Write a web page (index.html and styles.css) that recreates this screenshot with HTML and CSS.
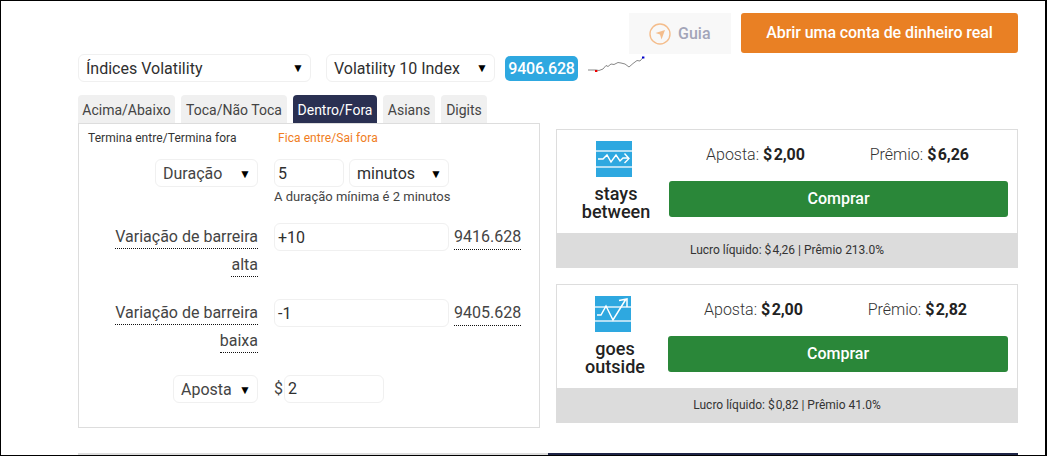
FILE: index.html
```html
<!DOCTYPE html>
<html lang="pt">
<head>
<meta charset="utf-8">
<title>Negociação</title>
<link rel="stylesheet" href="styles.css">
</head>
<body>
<div class="frame">
  <div class="top-actions">
    <div class="guide">
      <svg class="guide-icon" width="22" height="22" viewBox="0 0 22 22"><circle cx="11" cy="11" r="10" fill="none" stroke="#f4bd8c" stroke-width="1.4"/><path d="M6.5 10 L16 7 L12.5 16.5 L11 11.5 Z" fill="#f4bd8c"/></svg>
      <span>Guia</span>
    </div>
    <div class="real-account">Abrir uma conta de dinheiro real</div>
  </div>
  <div class="market-row">
    <div class="select market"><span>Índices Volatility</span><i class="caret">▼</i></div>
    <div class="select symbol"><span>Volatility 10 Index</span><i class="caret">▼</i></div>
    <div class="spot">9406.628</div>
    <svg class="spark" width="60" height="22" viewBox="0 0 60 22"><path d="M1 16 H9 L12 16.500 L16 15 L19 11.500 L21 12.500 L24 10 L27 10.500 L31 8.500 L34 9 L38 10 L42 13 L46 9.500 L50 6.500 L53 7 L56 3.500" fill="none" stroke="#555" stroke-width=".7"/><rect x="8" y="16" width="2.400" height="2" fill="#e00"/><rect x="55" y="2.500" width="2.400" height="2" fill="#00c"/></svg>
  </div>
  <div class="tabs">
    <div class="tab">Acima/Abaixo</div>
    <div class="tab">Toca/Não Toca</div>
    <div class="tab active">Dentro/Fora</div>
    <div class="tab">Asians</div>
    <div class="tab">Digits</div>
  </div>
  <div class="content">
    <div class="form">
      <div class="subtabs"><span class="sub">Termina entre/Termina fora</span><span class="sub current">Fica entre/Sai fora</span></div>
      <div class="f-row duration-row">
        <div class="f-label"><div class="select small duration"><span>Duração</span><i class="caret">▼</i></div></div>
        <div class="f-field">
          <div class="inline">
            <div class="input dur-value">5</div>
            <div class="select small unit"><span>minutos</span><i class="caret">▼</i></div>
          </div>
          <div class="hint">A duração mínima é 2 minutos</div>
        </div>
      </div>
      <div class="f-row barrier">
        <div class="f-label"><span class="dotted">Variação de barreira</span><br><span class="dotted">alta</span></div>
        <div class="f-field inline"><div class="input wide">+10</div><span class="abs-value dotted">9416.628</span></div>
      </div>
      <div class="f-row barrier">
        <div class="f-label"><span class="dotted">Variação de barreira</span><br><span class="dotted">baixa</span></div>
        <div class="f-field inline"><div class="input wide">-1</div><span class="abs-value dotted">9405.628</span></div>
      </div>
      <div class="f-row amount">
        <div class="f-label"><div class="select small stake"><span>Aposta</span><i class="caret">▼</i></div></div>
        <div class="f-field inline"><span class="currency">$</span><div class="input amount-value">2</div></div>
      </div>
    </div>
    <div class="cards">
      <div class="card">
        <div class="card-main first">
          <div class="card-type">
            <svg class="type-icon" width="36" height="36" viewBox="0 0 36 36"><rect width="36" height="36" fill="#2ea8e0"/><path d="M0 10 H36 M0 26 H36" stroke="#dff1fa" stroke-width="1.600"/><path d="M2 18 H7 L11 14 L15 21 L20 14 L24 20 L27 17 H33 M28.500 12.500 L33 17.500 L28.500 22" fill="none" stroke="#fff" stroke-width="1.400"/></svg>
            <div class="type-name">stays<br>between</div>
          </div>
          <div class="card-body">
            <div class="stake-line"><span class="pair"><span class="lab">Aposta:</span> <b>$&#8202;2,00</b></span><span class="pair"><span class="lab">Prêmio:</span> <b>$&#8202;6,26</b></span></div>
            <div class="buy">Comprar</div>
          </div>
        </div>
        <div class="card-foot">Lucro líquido: $&#8202;4,26 | Prêmio 213.0%</div>
      </div>
      <div class="card">
        <div class="card-main">
          <div class="card-type">
            <svg class="type-icon" width="36" height="36" viewBox="0 0 36 36"><rect width="36" height="36" fill="#2ea8e0"/><path d="M0 11 H36 M0 25 H36" stroke="#dff1fa" stroke-width="1.300"/><path d="M2 19 H6 L11 10 L18 24 L31 3 M24 4.500 L32 3 L32 11" fill="none" stroke="#fff" stroke-width="1.500"/></svg>
            <div class="type-name">goes<br>outside</div>
          </div>
          <div class="card-body">
            <div class="stake-line"><span class="pair"><span class="lab">Aposta:</span> <b>$&#8202;2,00</b></span><span class="pair"><span class="lab">Prêmio:</span> <b>$&#8202;2,82</b></span></div>
            <div class="buy">Comprar</div>
          </div>
        </div>
        <div class="card-foot">Lucro líquido: $&#8202;0,82 | Prêmio 41.0%</div>
      </div>
    </div>
  </div>
  <div class="bottom-strip"><div class="strip-left"></div><div class="strip-right"></div></div>
</div>
</body>
</html>
```
FILE: styles.css
```css
* { box-sizing: border-box; }
html, body { margin: 0; height: 456px; overflow: hidden; background: #fff; }
body { font-family: Roboto, "Liberation Sans", sans-serif; color: #2f2f2f; }
.frame { width: 1047px; height: 456px; border: 1px solid #000; border-width: 1px 2px 1px 1px; padding: 12px 27px 0 77px; overflow: hidden; }

.top-actions { display: flex; justify-content: flex-end; gap: 10px; height: 41px; }
.guide { width: 102px; height: 41px; background: #f8f8f8; display: flex; align-items: center; padding-left: 20px; gap: 7px; color: #a3a5b8; font-size: 16px; font-weight: 500; }
.real-account { width: 277px; height: 40px; padding-bottom: 2px; background: #e98024; color: #fff; border-radius: 3px; font-size: 16px; font-weight: 500; letter-spacing: -.08px; display: flex; align-items: center; justify-content: center; }

.market-row { display: flex; align-items: center; height: 28px; }
.select { display: flex; align-items: center; justify-content: space-between; background: #fff; border: 1px solid #f0f0f0; border-radius: 6px; font-size: 16px; height: 28px; padding: 0 6px 0 7px; }
.caret { font-style: normal; font-size: 12px; color: #000; }
.market { width: 233px; }
.symbol { width: 169px; margin-left: 15px; }
.spot { width: 73px; height: 25px; margin-left: 10px; background: #2ea8e0; color: #fff; border-radius: 5px; font-size: 16px; font-weight: 500; letter-spacing: -.2px; display: flex; align-items: center; justify-content: center; }
.spark { margin-left: 9px; margin-top: -6px; }

.tabs { display: flex; gap: 6px; margin-top: 13px; height: 28px; }
.tab { background: #f0f0f0; border-radius: 4px 4px 0 0; font-size: 14px; color: #444; height: 28px; padding: 2px 5px 0; display: flex; align-items: center; justify-content: center; }
.tab:nth-child(1) { width: 97px; }
.tab:nth-child(2) { width: 106px; }
.tab:nth-child(3) { width: 84px; }
.tab:nth-child(4) { width: 52px; }
.tab:nth-child(5) { width: 46px; }
.tab.active { background: #2a3052; color: #fff; }

.content { display: flex; gap: 16px; align-items: flex-start; }
.form { width: 462px; height: 305px; border: 1px solid #ddd; }
.subtabs { display: flex; height: 27px; align-items: center; font-size: 12px; letter-spacing: .07px; padding-left: 9px; }
.sub { width: 190px; color: #333; }
.sub.current { color: #f07d22; }

.f-row { display: flex; }
.f-label { width: 179px; text-align: right; font-size: 16px; line-height: 28px; color: #444; display: flex; flex-direction: column; align-items: flex-end; flex-shrink: 0; }
.barrier .f-label { display: block; }
.f-field { margin-left: 16px; }
.inline { display: flex; align-items: center; }
.duration-row { margin-top: 8px; height: 64px; }
.select.small { height: 28px; padding-top: 1px; }
.duration { width: 103px; }
.unit { width: 100px; margin-left: 5px; }
.stake { width: 85px; margin-top: 1px; }
.input { height: 28px; border: 1px solid #f0f0f0; border-radius: 6px; font-size: 16px; padding: 0 3px; display: flex; align-items: center; background: #fff; }
.dur-value { width: 70px; }
.hint { font-size: 13px; color: #444; margin-top: 2px; line-height: 16px; }
.barrier { height: 76px; align-items: flex-start; }
.dotted { border-bottom: 1px dotted #111; padding-bottom: 2px; }
.wide { width: 175px; }
.abs-value { margin-left: 5px; margin-top: 2px; font-size: 16px; color: #444; line-height: 20px; }
.amount { margin-top: -1px; }
.currency { font-size: 16px; color: #444; margin-right: 1px; line-height: 22px; }
.amount-value { width: 100px; }

.cards { width: 462px; padding-top: 6px; display: flex; flex-direction: column; gap: 16px; }
.card { height: 139px; border: 1px solid #ddd; border-bottom: 0; display: flex; flex-direction: column; }
.card-main { flex: 1; display: flex; padding: 11px 9px 0 0; }
.card-type { width: 111px; padding-left: 5px; display: flex; flex-direction: column; align-items: center; flex-shrink: 0; }
.card-main.first .card-type { width: 112px; padding-left: 6px; }
.type-icon { margin-right: 4px; }
.type-name { font-size: 18px; font-weight: 500; line-height: 18px; text-align: center; color: #222; margin-top: 8px; }
.card-body { flex: 1; }
.stake-line { display: flex; gap: 65px; padding-left: 36px; font-size: 16px; height: 40px; padding-top: 4px; line-height: 20px; }
.card-main.first .stake-line { padding-left: 37px; }
.lab { color: #333; font-weight: 300; }
.stake-line b { font-weight: 700; color: #222; letter-spacing: -.1px; }
.buy { background: #2a8739; color: #fff; height: 36px; padding-bottom: 2px; border-radius: 3px; font-size: 16px; font-weight: 500; display: flex; align-items: center; justify-content: center; }
.card-foot { height: 35px; padding-bottom: 2px; background: #dcdcdc; font-size: 12px; color: #333; display: flex; align-items: center; justify-content: center; margin: 0 -1px; }

.bottom-strip { display: flex; margin-top: 25px; height: 3px; }
.strip-left { width: 470px; background: #ddd; }
.strip-right { width: 470px; background: #1f2547; }
```
